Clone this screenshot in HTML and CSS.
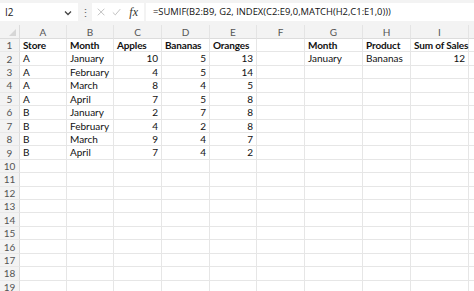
FILE: index.html
```html
<!DOCTYPE html>
<html lang="en">
<head>
  <meta charset="UTF-8" />
  <title>SUMIF INDEX MATCH</title>
  <link rel="stylesheet" href="styles.css">
</head>
<body>
  <div class="formula-bar">
    <div class="name-box">
      <span>I2</span>
      <svg class="chevron" width="8" height="6" viewBox="0 0 8 6"><path d="M1 1.5 L4 4.5 L7 1.5" fill="none" stroke="#444" stroke-width="1.3"/></svg>
    </div>
    <div class="dots">⋮</div>
    <div class="buttons">
      <svg width="10" height="10" viewBox="0 0 10 10"><path d="M1 1 L9 9 M9 1 L1 9" stroke="#b5b5b5" stroke-width="1"/></svg>
      <svg width="11" height="10" viewBox="0 0 11 10"><path d="M1 5.5 L4 8.5 L10 1.5" fill="none" stroke="#b5b5b5" stroke-width="1"/></svg>
      <span class="fx">fx</span>
    </div>
    <div class="formula">=SUMIF(B2:B9, G2, INDEX(C2:E9,0,MATCH(H2,C1:E1,0)))</div>
  </div>

  <div class="sheet" id="sheet"></div>

  <script>
    const cols = ['A', 'B', 'C', 'D', 'E', 'F', 'G', 'H', 'I', ''];
    const data = [
      ['Store', 'Month', 'Apples', 'Bananas', 'Oranges', '', 'Month', 'Product', 'Sum of Sales'],
      ['A', 'January', 10, 5, 13, '', 'January', 'Bananas', 12],
      ['A', 'February', 4, 5, 14],
      ['A', 'March', 8, 4, 5],
      ['A', 'April', 7, 5, 8],
      ['B', 'January', 2, 7, 8],
      ['B', 'February', 4, 2, 8],
      ['B', 'March', 9, 4, 7],
      ['B', 'April', 7, 4, 2]
    ];

    const sheet = document.getElementById('sheet');

    function cell(cls, text) {
      const div = document.createElement('div');
      div.className = cls;
      div.textContent = text;
      sheet.appendChild(div);
    }

    cell('corner', '');
    cols.forEach(c => cell('col-head', c));

    for (let r = 1; r <= 19; r++) {
      cell('row-head', r);
      const row = data[r - 1] || [];
      cols.forEach((c, i) => {
        const v = row[i] === undefined ? '' : row[i];
        let cls = 'cell';
        if (typeof v === 'number') cls += ' num';
        if (r === 1) cls += ' bold';
        cell(cls, v);
      });
    }
  </script>
</body>
</html>
```

FILE: styles.css
```css
* {
  box-sizing: border-box;
}
body {
  margin: 0;
  background: #f3f3f3;
  font-family: Lato, "Open Sans", sans-serif;
  color: #000;
  overflow: hidden;
  width: 474px;
  height: 291px;
}
.formula-bar {
  display: flex;
  align-items: center;
  height: 25px;
  padding: 3px 0 4px 0;
  font-family: "Open Sans", sans-serif;
}
.name-box {
  display: flex;
  align-items: center;
  justify-content: space-between;
  width: 78px;
  height: 18px;
  background: #fff;
  padding: 0 6px 0 5px;
  font-size: 10px;
  color: #222;
}
.chevron {
  margin-top: 1px;
}
.dots {
  width: 14px;
  text-align: center;
  font-size: 11px;
  color: #666;
}
.buttons {
  display: flex;
  align-items: center;
  gap: 7px;
  height: 18px;
  background: #fff;
  padding: 0 6px 0 5px;
  width: 52px;
}
.fx {
  font-family: "Liberation Serif", serif;
  font-style: italic;
  font-size: 12px;
  color: #333;
  margin-left: 1px;
}
.formula {
  flex: 1;
  height: 18px;
  line-height: 18px;
  background: #fff;
  margin-left: 2px;
  padding-left: 7px;
  font-size: 9.4px;
  color: #111;
  white-space: nowrap;
}
.sheet {
  display: grid;
  grid-template-columns: 20px 47px 47px 48px 48px 47px 48px 58px 48px 58px 30px;
  grid-template-rows: 14px repeat(19, 13.43px);
  background: #fff;
  height: 266px;
}
.corner,
.col-head,
.row-head {
  background: #f3f3f3;
  color: #555;
  font-size: 10px;
  display: flex;
  align-items: center;
  justify-content: center;
}
.corner {
  position: relative;
  border-right: 1px solid #dcdcdc;
  border-bottom: 1px solid #dcdcdc;
}
.corner::after {
  content: "";
  position: absolute;
  right: 3px;
  bottom: 2px;
  border-left: 7px solid transparent;
  border-bottom: 7px solid #d6d6d6;
}
.col-head {
  border-bottom: 1px solid #dcdcdc;
  border-right: 1px solid #e4e4e4;
  padding-top: 1px;
}
.row-head {
  border-right: 1px solid #dcdcdc;
  border-bottom: 1px solid #e8e8e8;
  font-size: 10px;
}
.cell {
  border-right: 1px solid #e6e6e6;
  border-bottom: 1px solid #e6e6e6;
  font-size: 10px;
  line-height: 12.4px;
  padding: 0 3px;
  white-space: nowrap;
  overflow: visible;
  color: #111;
}
.num {
  text-align: right;
}
.bold {
  font-weight: bold;
  letter-spacing: -0.15px;
}
```
